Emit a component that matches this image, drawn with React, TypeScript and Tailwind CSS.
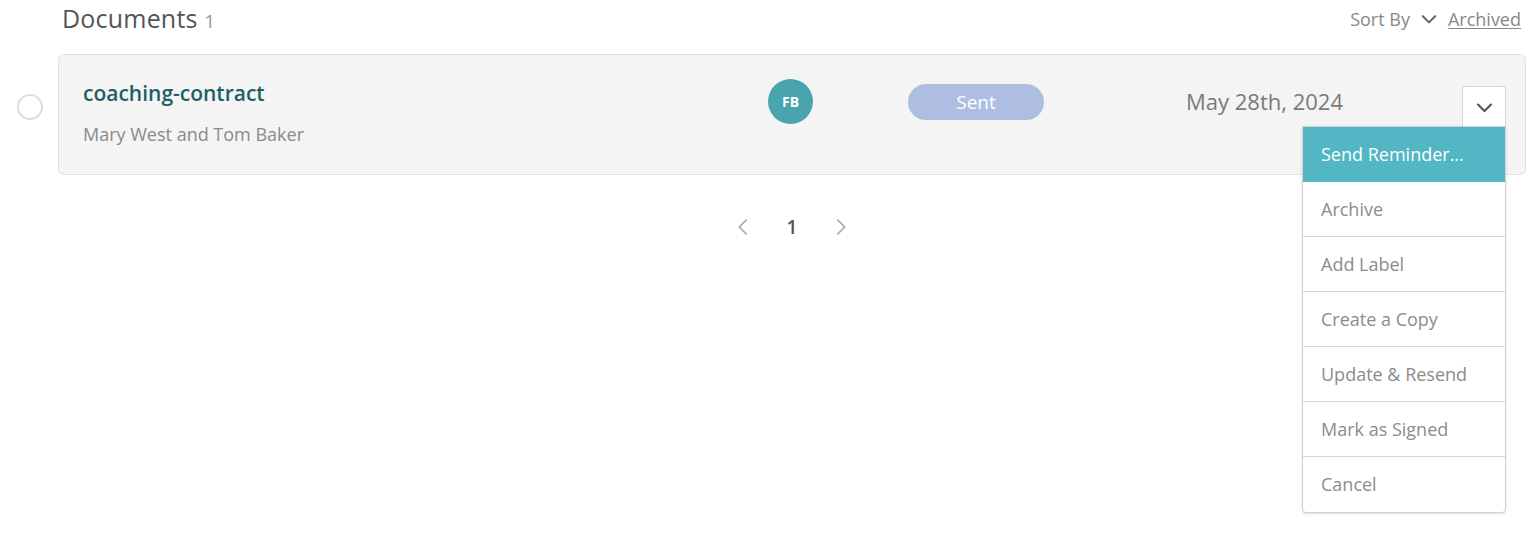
import React from "react";

const menuItems = [
  "Archive",
  "Add Label",
  "Create a Copy",
  "Update & Resend",
  "Mark as Signed",
  "Cancel",
];

function Chevron({ className }: { className?: string }) {
  return (
    <svg className={className} viewBox="0 0 16 16" fill="none" stroke="currentColor">
      <path d="M2.5 5.5l5.5 5.5 5.5-5.5" strokeWidth={1.8} strokeLinecap="round" strokeLinejoin="round" />
    </svg>
  );
}

export default function App() {
  return (
    <div className="w-[1536px] h-[540px] bg-white overflow-hidden font-['Open_Sans','Liberation_Sans',sans-serif]">
      {/* Header */}
      <div className="flex items-center justify-between pl-[62px] pr-[15px] h-[38px]">
        <h1 className="text-[25px] text-[#555] leading-[32px] tracking-[0.2px]">
          Documents <span className="text-[19px] text-[#999]">1</span>
        </h1>
        <div className="flex items-center text-[18px] text-[#888]">
          <span>Sort By</span>
          <Chevron className="w-[18px] h-[18px] ml-[10px] text-[#666]" />
          <a href="#" className="ml-[10px] underline underline-offset-2">
            Archived
          </a>
        </div>
      </div>

      {/* Document row */}
      <div className="flex items-start mt-[16px]">
        <div className="ml-[17px] mt-[40px] w-[26px] h-[26px] rounded-full border-2 border-[#dedede] bg-white" />
        <div className="ml-[15px] w-[1468px]">
          <div className="flex items-start h-[121px] bg-[#f4f4f4] border border-[#e2e2e2] rounded-[6px]">
            <div className="w-[709px] pl-[24px] pt-[26px]">
              <div className="text-[21px] leading-[24px] font-semibold text-[#1e5f68]">coaching-contract</div>
              <div className="mt-[18px] text-[18px] leading-[22px] text-[#8a8a8a]">
                Mary West and Tom Baker
              </div>
            </div>
            <div className="mt-[24px] w-[45px] h-[45px] rounded-full bg-[#4aa4ae] flex items-center justify-center text-white text-[14px] font-bold">
              FB
            </div>
            <div className="ml-[95px] mt-[29px] w-[136px] h-[36px] rounded-full bg-[#aebee2] flex items-center justify-center text-white text-[19px]">
              Sent
            </div>
            <div className="ml-[142px] mt-[33px] text-[22px] leading-[26px] text-[#7a7a7a]">May 28th, 2024</div>
            <div className="relative ml-auto mr-[19px] mt-[31px]">
              <button className="w-[44px] h-[42px] bg-white border border-b-0 border-[#d6d6d6] rounded-t-[4px] flex items-center justify-center text-[#555]">
                <Chevron className="w-[19px] h-[19px]" />
              </button>
              <ul className="absolute right-0 top-[40px] z-10 w-[204px] bg-white border border-[#d2d2d2] rounded-b-[4px] text-[18px] shadow-sm">
                <li className="h-[55px] flex items-center pl-[18px] bg-[#52b6c4] text-white">Send Reminder...</li>
                {menuItems.map((item, i) => (
                  <li
                    key={item}
                    className={`h-[55px] flex items-center pl-[18px] text-[#8c8c8c] ${
                      i < menuItems.length - 1 ? "border-b border-[#d6d6d6]" : ""
                    }`}
                  >
                    {item}
                  </li>
                ))}
              </ul>
            </div>
          </div>

          {/* Pagination */}
          <div className="flex items-center justify-center mt-[38px] gap-[34px] text-[#aaa]">
            <svg className="w-[20px] h-[20px]" viewBox="0 0 16 16" fill="none" stroke="currentColor">
              <path d="M10.5 2.5L5 8l5.5 5.5" strokeWidth={1.4} strokeLinecap="round" strokeLinejoin="round" />
            </svg>
            <span className="text-[19px] font-semibold text-[#555]">1</span>
            <svg className="w-[20px] h-[20px]" viewBox="0 0 16 16" fill="none" stroke="currentColor">
              <path d="M5.5 2.5L11 8l-5.5 5.5" strokeWidth={1.4} strokeLinecap="round" strokeLinejoin="round" />
            </svg>
          </div>
        </div>
      </div>
    </div>
  );
}
